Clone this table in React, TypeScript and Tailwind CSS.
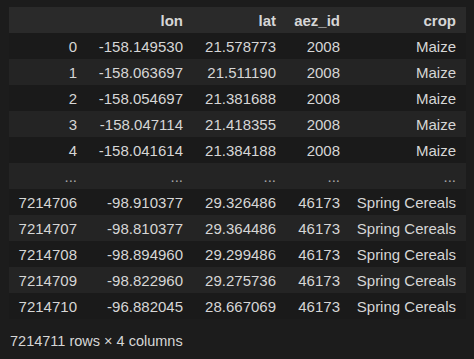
import React from "react";

const rows: [string, string, string, string, string][] = [
  ["0", "-158.149530", "21.578773", "2008", "Maize"],
  ["1", "-158.063697", "21.511190", "2008", "Maize"],
  ["2", "-158.054697", "21.381688", "2008", "Maize"],
  ["3", "-158.047114", "21.418355", "2008", "Maize"],
  ["4", "-158.041614", "21.384188", "2008", "Maize"],
  ["...", "...", "...", "...", "..."],
  ["7214706", "-98.910377", "29.326486", "46173", "Spring Cereals"],
  ["7214707", "-98.810377", "29.364486", "46173", "Spring Cereals"],
  ["7214708", "-98.894960", "29.299486", "46173", "Spring Cereals"],
  ["7214709", "-98.822960", "29.275736", "46173", "Spring Cereals"],
  ["7214710", "-96.882045", "28.667069", "46173", "Spring Cereals"],
];

const widths = ["w-[78px]", "w-[106px]", "w-[93px]", "w-[64px]", "w-[116px]"];

export default function App() {
  return (
    <div
      className="w-[474px] h-[359px] bg-[#1c1c1c] text-[#d6d6d6] overflow-hidden"
      style={{ fontFamily: '"Liberation Sans", Arial, sans-serif' }}
    >
      <div className="pt-[7px] pl-[9px]">
        <div className="flex w-[457px] h-[26px] bg-[#2a2a2a] items-center pt-[2px] text-[15px] font-bold">
          {["", "lon", "lat", "aez_id", "crop"].map((h, i) => (
            <div key={i} className={`${widths[i]} text-right pr-[10px]`}>
              {h}
            </div>
          ))}
        </div>
        {rows.map((r, ri) => (
          <div
            key={ri}
            className={`flex w-[457px] h-[26px] items-center pt-[2px] text-[15px] ${
              ri % 2 === 1 ? "bg-[#242424]" : "bg-[#1a1a1a]"
            } ${ri === 5 ? "text-[#a8a8a8]" : ""}`}
          >
            {r.map((c, ci) => (
              <div key={ci} className={`${widths[ci]} text-right pr-[10px] whitespace-nowrap`}>
                {c}
              </div>
            ))}
          </div>
        ))}
      </div>
      <div className="pl-[10px] pt-[12px] text-[14.5px]">7214711 rows × 4 columns</div>
    </div>
  );
}
